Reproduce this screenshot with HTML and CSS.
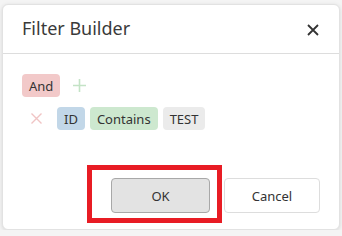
FILE: index.html
```html
<!DOCTYPE html>
<html lang="en">
<head>
  <meta charset="UTF-8" />
  <title>Filter Builder</title>
  <link rel="stylesheet" href="styles.css">
</head>
<body>
  <div class="dialog">
    <div class="dialog-header">
      <span class="dialog-title">Filter Builder</span>
      <span class="close-btn">
        <svg width="12" height="12" viewBox="0 0 12 12">
          <path d="M1 1L11 11M11 1L1 11" stroke="#333" stroke-width="1.8" />
        </svg>
      </span>
    </div>

    <div class="dialog-body">
      <div class="row">
        <span class="chip chip-group">And</span>
        <span class="icon-add">
          <svg width="13" height="13" viewBox="0 0 13 13">
            <path d="M6.5 0V13M0 6.5H13" stroke="#c4e3c6" stroke-width="1.6" />
          </svg>
        </span>
      </div>
      <div class="row row-condition">
        <span class="icon-remove">
          <svg width="11" height="11" viewBox="0 0 11 11">
            <path d="M0.5 0.5L10.5 10.5M10.5 0.5L0.5 10.5" stroke="#f0c4c4" stroke-width="1.4" />
          </svg>
        </span>
        <span class="chip chip-field">ID</span>
        <span class="chip chip-op">Contains</span>
        <span class="chip chip-value">TEST</span>
      </div>
    </div>

    <div class="dialog-footer">
      <button class="btn btn-ok">OK</button>
      <button class="btn btn-cancel">Cancel</button>
      <div class="highlight"></div>
    </div>
  </div>
</body>
</html>
```

FILE: styles.css
```css
* {
  box-sizing: border-box;
}

body {
  margin: 0;
  padding: 4px 2px 0;
  background: #f4f4f4;
  font-family: 'Noto Sans', 'Open Sans', sans-serif;
  color: #333;
}

.dialog {
  width: 338px;
  height: 226px;
  background: #fff;
  border: 1px solid #e2e2e2;
  border-radius: 6px;
  box-shadow: 0 1px 4px rgba(0, 0, 0, 0.12);
  display: flex;
  flex-direction: column;
}

.dialog-header {
  height: 49px;
  border-bottom: 1px solid #ddd;
  display: flex;
  align-items: center;
  justify-content: space-between;
  padding: 0 20px 0 19px;
}

.dialog-title {
  font-size: 18px;
  color: #3a3a3a;
  padding-bottom: 2px;
}

.close-btn {
  display: flex;
  margin-top: 1px;
}

.dialog-body {
  padding: 20px 19px 0;
  flex: 1;
}

.row {
  display: flex;
  align-items: center;
  gap: 13px;
}

.row-condition {
  margin-top: 10px;
  gap: 5px;
}

.chip {
  display: inline-flex;
  align-items: center;
  height: 23px;
  padding: 0 7px;
  border-radius: 4px;
  font-size: 13px;
  color: #333;
}

.chip-group {
  background: #f2c9c9;
}

.chip-field {
  background: #c2d7e8;
}

.chip-op {
  background: #cde8cf;
}

.chip-value {
  background: #ebebeb;
}

.icon-add {
  display: flex;
}

.icon-remove {
  display: flex;
  margin: 0 10px 0 9px;
}

.dialog-footer {
  position: relative;
  display: flex;
  justify-content: flex-end;
  gap: 14px;
  padding: 0 19px 16px;
}

.btn {
  height: 35px;
  border-radius: 4px;
  font-family: inherit;
  font-size: 13px;
  color: #333;
}

.btn-ok {
  width: 99px;
  background: #e3e3e3;
  border: 1px solid #a8a8a8;
}

.btn-cancel {
  width: 96px;
  background: #fff;
  border: 1px solid #ddd;
}

.highlight {
  position: absolute;
  left: 84px;
  top: -13px;
  width: 135px;
  height: 58px;
  border: 5px solid #e81c24;
}
```
